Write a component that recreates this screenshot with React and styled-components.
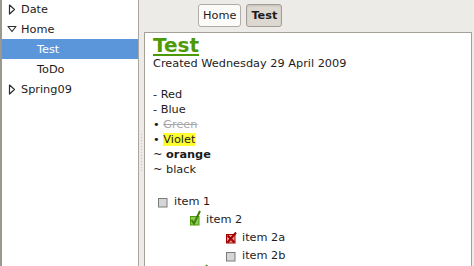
import styled, { createGlobalStyle } from 'styled-components';

const GlobalStyle = createGlobalStyle`
  html, body {
    margin: 0;
    padding: 0;
    overflow: hidden;
  }
  body {
    font-family: 'DejaVu Sans', 'Liberation Sans', sans-serif;
    font-size: 11.3px;
    color: #1c1c1c;
  }
`;

const Window = styled.div`
  display: flex;
  width: 474px;
  height: 266px;
  overflow: hidden;
  background: #edebe7;
`;

const Sidebar = styled.div`
  width: 136px;
  flex-shrink: 0;
  background: #ffffff;
  border-left: 2px solid #9c988f;
  border-right: 1px solid #aaa69f;
`;

const TreeRow = styled.div`
  display: flex;
  align-items: center;
  height: 20px;
  padding-left: ${p => p.$indent}px;
  background: ${p => (p.$selected ? '#5b96da' : 'transparent')};
  color: ${p => (p.$selected ? '#ffffff' : '#1c1c1c')};
  &:first-child {
    height: 19px;
  }
`;

const Expander = styled.span`
  display: flex;
  align-items: center;
  justify-content: center;
  width: 15px;
  height: 20px;
  margin-left: 2px;
  margin-right: 2px;
`;

const Splitter = styled.div`
  width: 5px;
  flex-shrink: 0;
  display: flex;
  align-items: center;
  justify-content: center;
`;

const Grip = styled.div`
  width: 3px;
  height: 40px;
  margin-top: 40px;
  background-image: radial-gradient(#c9c5bd 0.7px, transparent 0.8px);
  background-size: 3px 3px;
`;

const Main = styled.div`
  flex: 1;
  display: flex;
  flex-direction: column;
  min-width: 0;
  padding-right: 2px;
`;

const Toolbar = styled.div`
  height: 32px;
  flex-shrink: 0;
  display: flex;
  align-items: flex-start;
  gap: 5px;
  padding-left: 54px;
  padding-top: 4px;
  box-sizing: border-box;
`;

const TabButton = styled.button`
  height: 23px;
  padding: 0 4px;
  font-family: inherit;
  font-size: 11.3px;
  font-weight: ${p => (p.$active ? 'bold' : 'normal')};
  color: #1c1c1c;
  background: ${p => (p.$active ? '#ddd9d1' : '#fbfbfa')};
  border: 1px solid ${p => (p.$active ? '#a29e96' : '#b0aca5')};
  border-radius: 3px;
  box-shadow: ${p => (p.$active ? 'inset 0 1px 2px rgba(0,0,0,0.12)' : 'none')};
`;

const Content = styled.div`
  flex: 1;
  background: #ffffff;
  border: 1px solid #a4a098;
  border-bottom: none;
  padding: 1px 8px 0 8px;
  line-height: 15px;
`;

const Title = styled.div`
  font-size: 20px;
  line-height: 22px;
  font-weight: bold;
  color: #4e9a06;
  text-decoration: underline;
  text-decoration-thickness: 2px;
  text-underline-offset: 2px;
`;

const Line = styled.div`
  height: 15px;
  white-space: nowrap;
`;

const Blank = styled.div`
  height: ${p => p.$h || 15}px;
`;

const Strike = styled.span`
  color: #a8a8a8;
  text-decoration: line-through;
`;

const Highlight = styled.span`
  background: #ffff30;
`;

const CheckRow = styled.div`
  display: flex;
  align-items: center;
  height: 18px;
  padding-left: ${p => p.$indent}px;
  white-space: nowrap;
`;

const BoxIcon = styled.svg`
  width: 14px;
  height: 14px;
  margin-right: 2px;
  flex-shrink: 0;
  overflow: visible;
`;

const Triangle = ({ open }) =>
  open ? (
    <svg width="10" height="8" viewBox="0 0 10 8">
      <path d="M1 1.5 L9 1.5 L5 6.5 Z" fill="#fff" stroke="#2e2e2e" strokeWidth="1.2" strokeLinejoin="round" />
    </svg>
  ) : (
    <svg width="8" height="11" viewBox="0 0 8 11">
      <path d="M1.5 1 L6.5 5.5 L1.5 10 Z" fill="#fff" stroke="#2e2e2e" strokeWidth="1.2" strokeLinejoin="round" />
    </svg>
  );

const Box = ({ state }) => {
  if (state === 'done') {
    return (
      <BoxIcon viewBox="0 0 14 14">
        <rect x="0.5" y="4.5" width="8.5" height="8.5" fill="#8ccc5a" stroke="#4e9a06" />
        <path d="M1.5 8 L4 11.5 L10 -1" fill="none" stroke="#3f7f0a" strokeWidth="2" />
      </BoxIcon>
    );
  }
  if (state === 'cancel') {
    return (
      <BoxIcon viewBox="0 0 14 14">
        <rect x="0.5" y="4.5" width="8.5" height="8.5" fill="#e8a0a0" stroke="#a40000" />
        <path d="M1.5 5.5 L8.5 12.5 M1.5 12.5 L10 2.5" fill="none" stroke="#a40000" strokeWidth="2" />
      </BoxIcon>
    );
  }
  return (
    <BoxIcon viewBox="0 0 14 14">
      <rect x="0.5" y="4.5" width="8.5" height="8.5" fill="#d6d6d6" stroke="#7a7a7a" />
    </BoxIcon>
  );
};

const tree = [
  { label: 'Date', indent: 0, expander: 'closed' },
  { label: 'Home', indent: 0, expander: 'open' },
  { label: 'Test', indent: 16, selected: true },
  { label: 'ToDo', indent: 16 },
  { label: 'Spring09', indent: 0, expander: 'closed' },
];

const checks = [
  { label: 'item 1', indent: 5, state: 'open' },
  { label: 'item 2', indent: 37, state: 'done' },
  { label: 'item 2a', indent: 73, state: 'cancel' },
  { label: 'item 2b', indent: 73, state: 'open' },
  { label: '', indent: 44, state: 'done' },
];

const App = () => (
  <>
    <GlobalStyle />
    <Window>
      <Sidebar>
        {tree.map(node => (
          <TreeRow key={node.label} $indent={node.indent} $selected={node.selected}>
            <Expander>{node.expander && <Triangle open={node.expander === 'open'} />}</Expander>
            {node.label}
          </TreeRow>
        ))}
      </Sidebar>
      <Splitter>
        <Grip />
      </Splitter>
      <Main>
        <Toolbar>
          <TabButton>Home</TabButton>
          <TabButton $active>Test</TabButton>
        </Toolbar>
        <Content>
          <Title>Test</Title>
          <Line>Created Wednesday 29 April 2009</Line>
          <Blank $h={16} />
          <Line>- Red</Line>
          <Line>- Blue</Line>
          <Line>• <Strike>Green</Strike></Line>
          <Line>• <Highlight>Violet</Highlight></Line>
          <Line>~ <b>orange</b></Line>
          <Line>~ black</Line>
          <Blank />
          {checks.map((item, i) => (
            <CheckRow key={i} $indent={item.indent}>
              <Box state={item.state} />
              {item.label}
            </CheckRow>
          ))}
        </Content>
      </Main>
    </Window>
  </>
);

export default App;
